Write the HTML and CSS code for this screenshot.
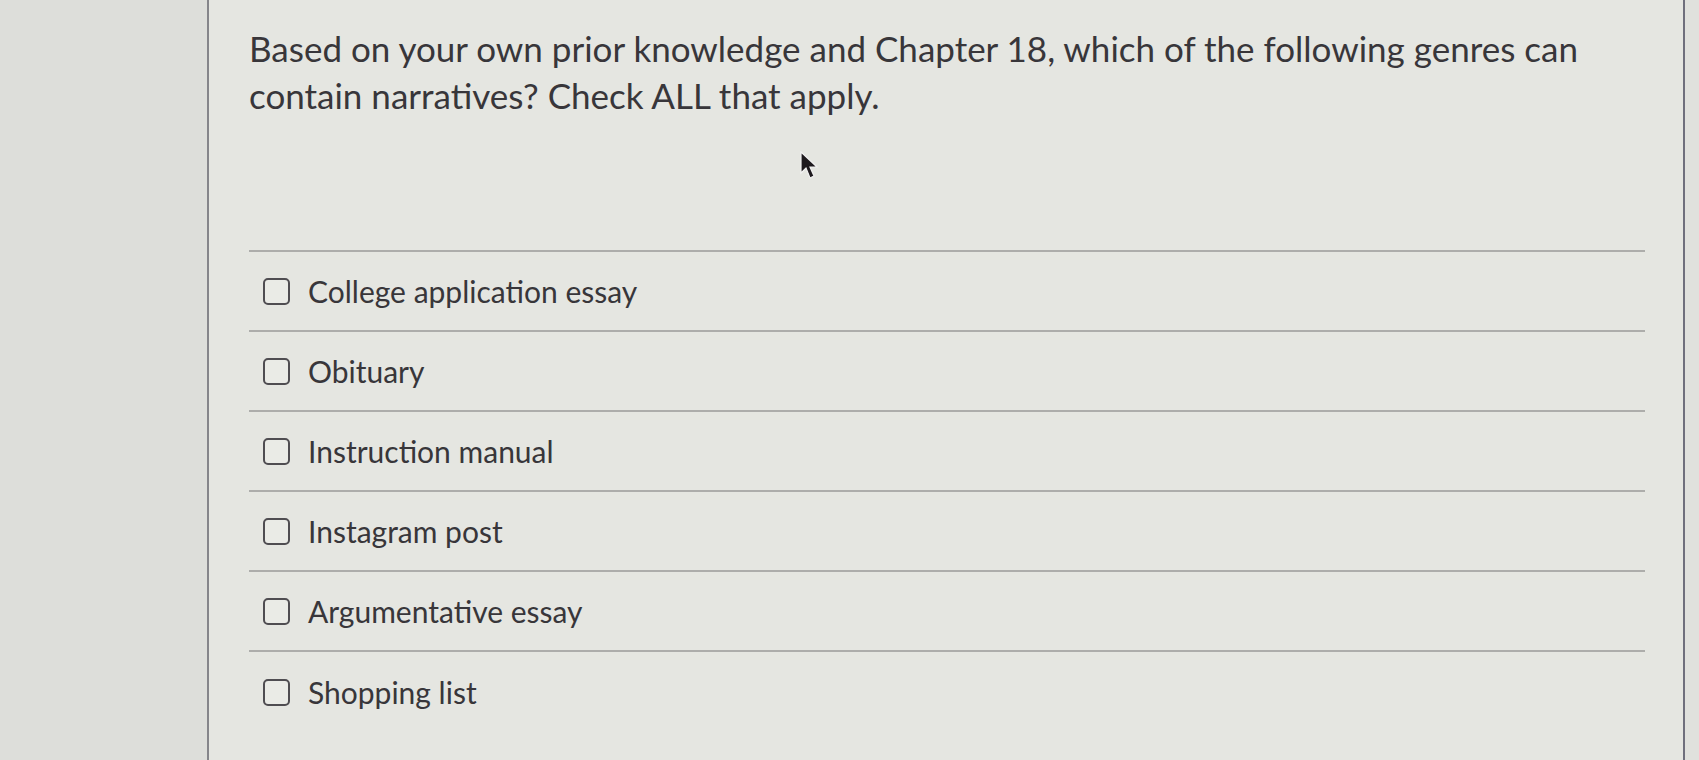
FILE: index.html
```html
<!DOCTYPE html>
<html lang="en">
<head>
    <meta charset="UTF-8">
    <meta name="viewport" content="width=device-width, initial-scale=1.0">
    <title>Quiz Question</title>
    <link rel="stylesheet" href="styles.css">
</head>
<body>

<div class="sidebar"></div>

<div class="main">
    <p class="question">Based on your own prior knowledge and Chapter 18, which of the following genres can contain narratives? Check ALL that apply.</p>

    <!-- Answer choices -->
    <ul class="answers">
        <li class="answer"><label><input type="checkbox"><span class="box"></span>College application essay</label></li>
        <li class="answer"><label><input type="checkbox"><span class="box"></span>Obituary</label></li>
        <li class="answer"><label><input type="checkbox"><span class="box"></span>Instruction manual</label></li>
        <li class="answer"><label><input type="checkbox"><span class="box"></span>Instagram post</label></li>
        <li class="answer"><label><input type="checkbox"><span class="box"></span>Argumentative essay</label></li>
        <li class="answer"><label><input type="checkbox"><span class="box"></span>Shopping list</label></li>
    </ul>
</div>

<div class="edge"></div>

<!-- mouse pointer -->
<svg class="pointer" width="22" height="30" viewBox="0 0 22 30">
    <path d="M2 1 L2 22 L7 17 L11 27 L15 25 L11 16 L18 16 Z" fill="#1e1a1e" stroke="#f2f2f2" stroke-width="1.2"/>
</svg>

</body>
</html>
```

FILE: styles.css
```css
body {
    margin: 0;
    height: 760px;
    overflow: hidden;
    display: flex;
    font-family: 'Lato', 'Open Sans', sans-serif;
    background-color: #e5e6e1;
    color: #38363a;
}

.sidebar {
    width: 207px;
    flex: none;
    background-color: #dddeda;
    border-right: 2px solid #85858a;
}

.main {
    width: 1476px;
    flex: none;
    box-sizing: border-box;
    padding: 0 38px 0 40px;
    border-right: 2px solid #6f6f7c;
}

.question {
    margin: 0;
    padding-top: 25px;
    font-size: 35px;
    line-height: 47px;
    height: 250px;
    box-sizing: border-box;
}

.answers {
    list-style: none;
    margin: 0;
    padding: 0;
    border-top: 2px solid #adadab;
}

.answer {
    height: 80px;
    box-sizing: border-box;
    border-bottom: 2px solid #adadab;
    display: flex;
    align-items: center;
    padding-left: 14px;
    font-size: 30px;
}

.answer:last-child {
    border-bottom: none;
}

.answer label {
    display: flex;
    align-items: center;
    gap: 18px;
}

.answer input {
    display: none;
}

.box {
    width: 23px;
    height: 23px;
    border: 2px solid #4f4d51;
    border-radius: 5px;
    background-color: #eaebe6;
}

.edge {
    flex: 1;
    background-color: #e0e1dd;
}

.pointer {
    position: absolute;
    left: 799px;
    top: 151px;
}
```
